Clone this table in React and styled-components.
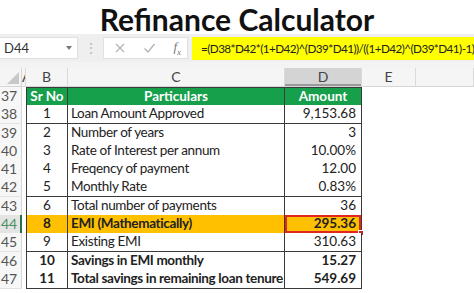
import React from 'react';
import styled, { createGlobalStyle } from 'styled-components';

const GlobalStyle = createGlobalStyle`
  html, body {
    margin: 0;
    padding: 0;
    background: #ffffff;
    font-family: Lato, "Liberation Sans", sans-serif;
    color: #222;
  }
`;

const rows = [
  { n: 38, sr: '1', label: 'Loan Amount Approved', value: '9,153.68' },
  { n: 39, sr: '2', label: 'Number of years', value: '3' },
  { n: 40, sr: '3', label: 'Rate of Interest per annum', value: '10.00%' },
  { n: 41, sr: '4', label: 'Freqency of payment', value: '12.00' },
  { n: 42, sr: '5', label: 'Monthly Rate', value: '0.83%' },
  { n: 43, sr: '6', label: 'Total number of payments', value: '36' },
  { n: 44, sr: '8', label: 'EMI (Mathematically)', value: '295.36', bold: true, hl: true },
  { n: 45, sr: '9', label: 'Existing EMI', value: '310.63' },
  { n: 46, sr: '10', label: 'Savings in EMI monthly', value: '15.27', bold: true },
  { n: 47, sr: '11', label: 'Total savings in remaining loan tenure', value: '549.69', bold: true },
];

export default function App() {
  return (
    <Page>
      <GlobalStyle />
      <Title>Refinance Calculator</Title>
      <FormulaBar>
        <NameBox>
          <span>D44</span>
          <Caret />
        </NameBox>
        <Dots>⋮</Dots>
        <IconBox>
          <svg width="12" height="12" viewBox="0 0 12 12">
            <path d="M2 2 L10 10 M10 2 L2 10" stroke="#b4b4b4" strokeWidth="1.3" fill="none" />
          </svg>
          <svg width="13" height="12" viewBox="0 0 13 12">
            <path d="M1.5 6.5 L5 10 L11.5 2" stroke="#b4b4b4" strokeWidth="1.3" fill="none" />
          </svg>
          <Fx>f<sub>x</sub></Fx>
        </IconBox>
        <Formula>=(D38*D42*(1+D42)^(D39*D41))/((1+D42)^(D39*D41)-1)</Formula>
      </FormulaBar>

      <Sheet>
        <HeadRow>
          <Corner>
            <svg width="12" height="12" viewBox="0 0 12 12">
              <path d="M12 0 L12 12 L0 12 Z" fill="#c8c8c8" />
            </svg>
          </Corner>
          <ColHead>A</ColHead>
          <ColHead>B</ColHead>
          <ColHead>C</ColHead>
          <ColHead $selected>D</ColHead>
          <ColHead>E</ColHead>
          <ColHead />
        </HeadRow>

        <Row>
          <RowNum>37</RowNum>
          <Blank />
          <Cell $head $first $top $align="center">Sr No</Cell>
          <Cell $head $top $align="center">Particulars</Cell>
          <Cell $head $top $align="center">Amount</Cell>
          <Blank />
          <Blank />
        </Row>

        {rows.map((r) => (
          <Row key={r.n}>
            <RowNum $active={r.hl}>{r.n}</RowNum>
            <Blank />
            <Cell $first $align="center" $bold={r.bold} $hl={r.hl}>{r.sr}</Cell>
            <Cell $bold={r.bold} $hl={r.hl}>{r.label}</Cell>
            <Cell $align="right" $bold={r.bold} $hl={r.hl} $selected={r.hl}>{r.value}</Cell>
            <Blank />
            <Blank />
          </Row>
        ))}
      </Sheet>
    </Page>
  );
}

const Page = styled.div`
  width: 474px;
  height: 293px;
  overflow: hidden;
`;

const Title = styled.h1`
  margin: 0;
  height: 34px;
  line-height: 38px;
  text-align: center;
  font-size: 30px;
  font-weight: 700;
  color: #111;
`;

const FormulaBar = styled.div`
  display: flex;
  align-items: flex-start;
  height: 34px;
  padding-top: 3px;
  box-sizing: border-box;
  background: #efefef;
  border-bottom: 6px solid #f3f3f3;
`;

const NameBox = styled.div`
  width: 78px;
  height: 22px;
  box-sizing: border-box;
  background: #fff;
  border: 1px solid #e0e0e0;
  border-left: none;
  display: flex;
  align-items: center;
  justify-content: space-between;
  padding: 0 5px 0 4px;
  font-size: 13px;
  color: #333;
`;

const Caret = styled.span`
  width: 0;
  height: 0;
  border-left: 3px solid transparent;
  border-right: 3px solid transparent;
  border-top: 4px solid #777;
`;

const Dots = styled.div`
  width: 25px;
  text-align: center;
  color: #bbb;
  font-size: 14px;
  line-height: 22px;
`;

const IconBox = styled.div`
  width: 85px;
  height: 22px;
  box-sizing: border-box;
  background: #fff;
  border: 1px solid #e0e0e0;
  display: flex;
  align-items: center;
  justify-content: space-between;
  padding: 0 6px 0 10px;
`;

const Fx = styled.span`
  font-family: "Liberation Serif", serif;
  font-style: italic;
  font-size: 13px;
  color: #777;

  sub {
    font-size: 9px;
  }
`;

const Formula = styled.div`
  flex: 1;
  margin-left: 4px;
  height: 23px;
  background: #ffff00;
  font-size: 11.7px;
  letter-spacing: -0.55px;
  line-height: 23px;
  padding-left: 9px;
  white-space: nowrap;
  overflow: hidden;
  color: #222;
`;

const Sheet = styled.div`
  display: flex;
  flex-direction: column;
`;

const columns = '22px 4px 42px 217px 77px 54px 1fr';

const HeadRow = styled.div`
  display: grid;
  grid-template-columns: ${columns};
  height: 18px;
  background: #f5f5f5;
  border-bottom: 1px solid #d6d6d6;
`;

const Corner = styled.div`
  display: flex;
  align-items: flex-end;
  justify-content: flex-end;
  padding: 0 2px 2px 0;
  border-right: 1px solid #d6d6d6;
`;

const ColHead = styled.div`
  font-size: 14px;
  line-height: 18px;
  text-align: center;
  color: #444;
  overflow: hidden;
  border-right: 1px solid #dadada;
  background: ${(p) => (p.$selected ? '#d4d4d4' : 'transparent')};
  box-shadow: ${(p) => (p.$selected ? 'inset 0 -2px 0 #9a9a9a' : 'none')};
`;

const Row = styled.div`
  display: grid;
  grid-template-columns: ${columns};
  height: 18.3px;
`;

const RowNum = styled.div`
  font-size: 14px;
  line-height: 18px;
  padding-left: 1px;
  color: ${(p) => (p.$active ? '#4b8f63' : '#555')};
  background: ${(p) => (p.$active ? '#e4e4e4' : '#f7f7f7')};
  border-right: ${(p) => (p.$active ? '2px solid #217346' : '1px solid #d6d6d6')};
  border-bottom: 1px solid #e2e2e2;
`;

const Blank = styled.div`
  background: #fff;
`;

const Cell = styled.div`
  position: relative;
  box-sizing: border-box;
  font-size: 13.5px;
  letter-spacing: ${(p) => (p.$align ? '0' : '-0.35px')};
  line-height: 17px;
  white-space: nowrap;
  overflow: visible;
  text-align: ${(p) => p.$align || 'left'};
  padding: 0 ${(p) => (p.$align === 'right' ? '5px' : '3px')} 0 3px;
  font-weight: ${(p) => (p.$head || p.$bold ? 700 : 400)};
  color: ${(p) => (p.$head ? '#fff' : '#222')};
  background: ${(p) => (p.$head ? '#16a04c' : p.$hl ? '#ffc000' : '#fff')};
  border-right: 1px solid #3a3a3a;
  border-bottom: 1px solid #3a3a3a;
  border-left: ${(p) => (p.$first ? '1px solid #3a3a3a' : 'none')};
  border-top: ${(p) => (p.$top ? '1px solid #3a3a3a' : 'none')};
  box-shadow: ${(p) => (p.$selected ? 'inset 0 0 0 2px #e0261e' : 'none')};

  &::after {
    content: '';
    display: ${(p) => (p.$selected ? 'block' : 'none')};
    position: absolute;
    right: -3px;
    bottom: -3px;
    width: 4px;
    height: 4px;
    background: #c0262a;
    border: 1px solid #fff;
  }
`;
